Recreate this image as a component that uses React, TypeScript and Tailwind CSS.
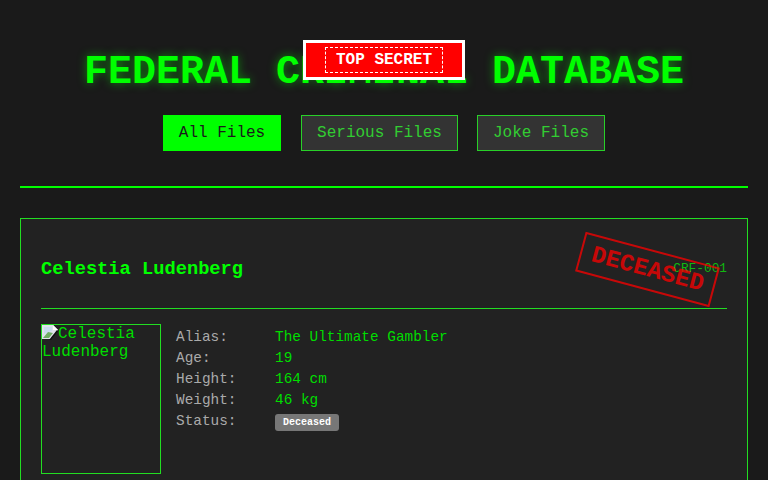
const FACTS = [
  { label: "Alias:", value: "The Ultimate Gambler" },
  { label: "Age:", value: "19" },
  { label: "Height:", value: "164 cm" },
  { label: "Weight:", value: "46 kg" },
];

function BrokenImage() {
  return (
    <svg width="16" height="16" viewBox="0 0 16 16" className="inline-block align-[-2px]">
      <path d="M0 1H11L16 6L9 15H0Z" fill="#dfe3ea" />
      <path d="M11 1V6H16Z" fill="#ffffff" />
      <path d="M2 3H10V7L2 10Z" fill="#c9dcee" />
      <path d="M1 14L6 8L11 9L7 14Z" fill="#6fae62" />
      <path d="M15 6L16 7L9 16H7Z" fill="#0c0c0c" />
    </svg>
  );
}

export default function App() {
  return (
    <div className="h-screen overflow-hidden bg-[#1a1a1a] p-5 font-['Liberation_Mono',monospace] text-[#00ff00]">
      <header className="relative border-b-2 border-[#00ff00] pt-[30px] pb-[35px] text-center">
        <h1 className="mb-5 text-[40px] leading-[45px] font-bold [text-shadow:0_0_10px_rgba(0,255,0,0.5)]">
          FEDERAL CRIMINAL DATABASE
        </h1>
        <div className="absolute top-5 left-1/2 -translate-x-1/2 border-[3px] border-white bg-[#ff0000] px-[19px] py-1">
          <span className="block border border-dashed border-white px-2.5 py-[3px] text-base leading-[18px] font-bold text-white">
            TOP SECRET
          </span>
        </div>
        <nav className="flex justify-center">
          <button type="button" className="h-9 w-[118px] border border-[#00ff00] bg-[#00ff00] text-base text-[#1a1a1a]">
            All Files
          </button>
          <button type="button" className="ml-5 h-9 w-[157px] border border-[#28d028] bg-[#333333] text-base text-[#32cd32]">
            Serious Files
          </button>
          <button type="button" className="ml-[19px] h-9 w-[128px] border border-[#28d028] bg-[#333333] text-base text-[#32cd32]">
            Joke Files
          </button>
        </nav>
      </header>

      <article className="relative mt-[30px] border border-[#22dd22] bg-[#222222] p-5">
        <div className="flex items-center justify-between border-b border-[#22dd22] pt-5 pb-7">
          <h3 className="text-[18.72px] leading-[21px] font-bold">Celestia Ludenberg</h3>
          <span className="mb-[2px] text-[12.8px] text-[#10b810]">CRF-001</span>
        </div>
        <div className="absolute top-[30px] right-[30px] rotate-[15deg] border-2 border-[#ff0000] px-2.5 py-[5px] text-2xl leading-[27px] font-bold text-[#ff0000] opacity-75">
          DECEASED
        </div>

        <div className="mt-[15px] flex gap-[15px]">
          <div className="h-[150px] w-[120px] shrink-0 border border-[#22dd22] text-base leading-[18px] text-[#00dd00]">
            <div className="-mt-px">
              <BrokenImage />
              Celestia Ludenberg
            </div>
          </div>
          <div className="flex-1 pt-[3px] text-[14.4px]">
            {FACTS.map((fact) => (
              <div key={fact.label} className="flex h-[21px] items-center">
                <span className="w-[99px] text-[#aaaaaa]">{fact.label}</span>
                <span className="text-[#00dd00]">{fact.value}</span>
              </div>
            ))}
            <div className="flex h-[21px] items-center">
              <span className="w-[99px] text-[#aaaaaa]">Status:</span>
              <span className="mt-[2px] flex h-[17px] items-center rounded-[3px] bg-[#777777] px-2 text-[10px] font-bold text-white">
                Deceased
              </span>
            </div>
          </div>
        </div>
      </article>
    </div>
  );
}
